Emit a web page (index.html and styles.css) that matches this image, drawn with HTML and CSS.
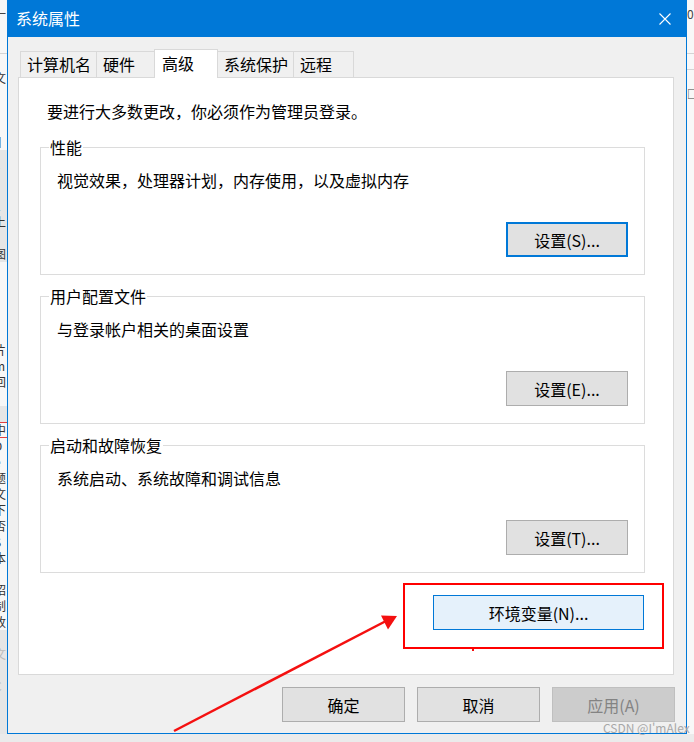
FILE: index.html
```html
<!DOCTYPE html>
<html lang="zh-CN">
<head>
  <meta charset="UTF-8" />
  <meta name="viewport" content="width=device-width, initial-scale=1.0"/>
  <title>系统属性</title>
  <link rel="stylesheet" href="styles.css">
</head>
<body>
  <div class="desk">
    <!-- window behind, left edge -->
    <div class="behind behind-left">
      <div class="ln dk">一</div>
      <div class="ln"></div>
      <div class="ln rule"></div>
      <div class="ln"></div>
      <div class="ln">文</div>
      <div class="ln"></div>
      <div class="ln"></div>
      <div class="ln"></div>
      <div class="ln dk bold">I</div>
      <div class="ln gr"></div>
      <div class="ln gr">亻</div>
      <div class="ln gr"></div>
      <div class="ln gr">1</div>
      <div class="ln gr">上</div>
      <div class="ln gr"></div>
      <div class="ln gr">图</div>
      <div class="ln"></div>
      <div class="ln"></div>
      <div class="ln"></div>
      <div class="ln"></div>
      <div class="ln"></div>
      <div class="ln">片</div>
      <div class="ln">m</div>
      <div class="ln">回</div>
      <div class="ln"></div>
      <div class="ln gr"></div>
      <div class="ln boxed">中</div>
      <div class="ln">D</div>
      <div class="ln">e</div>
      <div class="ln">题</div>
      <div class="ln">文</div>
      <div class="ln">下</div>
      <div class="ln">否</div>
      <div class="ln">S</div>
      <div class="ln">本</div>
      <div class="ln"></div>
      <div class="ln">绍</div>
      <div class="ln">制</div>
      <div class="ln">收</div>
      <div class="ln gr"></div>
      <div class="ln gr faint">文</div>
      <div class="ln gr"></div>
      <div class="ln gr faint">C</div>
      <div class="ln gr"></div>
      <div class="ln gr"></div>
      <div class="ln gr"></div>
    </div>

    <div class="window">
      <div class="titlebar">
        <span class="title">系统属性</span>
        <span class="close">
          <svg width="12" height="12" viewBox="0 0 12 12">
            <path d="M0.5 0.5L11.5 11.5M11.5 0.5L0.5 11.5" stroke="#fff" stroke-width="1.1" fill="none"/>
          </svg>
        </span>
      </div>

      <div class="tabs">
        <div class="tab">计算机名</div>
        <div class="tab">硬件</div>
        <div class="tab active">高级</div>
        <div class="tab">系统保护</div>
        <div class="tab">远程</div>
      </div>

      <div class="panel">
        <p class="intro">要进行大多数更改，你必须作为管理员登录。</p>

        <fieldset class="group">
          <legend>性能</legend>
          <p class="desc">视觉效果，处理器计划，内存使用，以及虚拟内存</p>
          <div class="actions"><button class="btn focus">设置(S)...</button></div>
        </fieldset>

        <fieldset class="group">
          <legend>用户配置文件</legend>
          <p class="desc">与登录帐户相关的桌面设置</p>
          <div class="actions"><button class="btn">设置(E)...</button></div>
        </fieldset>

        <fieldset class="group">
          <legend>启动和故障恢复</legend>
          <p class="desc">系统启动、系统故障和调试信息</p>
          <div class="actions"><button class="btn">设置(T)...</button></div>
        </fieldset>

        <div class="env-row">
          <div class="mark"><button class="btn hot">环境变量(N)...</button></div>
        </div>
      </div>

      <div class="footer">
        <button class="btn wide">确定</button>
        <button class="btn wide">取消</button>
        <button class="btn wide" disabled>应用(A)</button>
      </div>
    </div>

    <!-- window behind, right edge -->
    <div class="behind behind-right">
      <div class="ln dk">0</div>
      <div class="ln"></div>
      <div class="ln rule"></div>
      <div class="ln rule"></div>
      <div class="ln"></div>
      <div class="ln dk">□</div>
    </div>
  </div>

  <!-- annotation -->
  <svg class="annot" width="694" height="742" viewBox="0 0 694 742">
    <line x1="174" y1="731" x2="386" y2="621" stroke="#f41010" stroke-width="2.5"/>
    <polygon points="397,616 381,615.5 388,629.5" fill="#f41010"/>
    <rect x="472" y="649" width="2" height="2" fill="#f41010"/>
  </svg>

  <div class="watermark">CSDN @I'mAlex</div>
</body>
</html>
```

FILE: styles.css
```css
body {
  margin: 0;
  width: 694px;
  height: 742px;
  overflow: hidden;
  position: relative;
  background: #ebebeb;
  font-family: "Noto Sans CJK SC", "Noto Sans", sans-serif;
  font-size: 16px;
  color: #000;
}

p {
  margin: 0;
}

.desk {
  display: flex;
  height: 734px;
}

/* bits of the windows behind the dialog */
.behind {
  width: 7px;
  flex: none;
  overflow: hidden;
  padding-top: 6px;
  box-sizing: border-box;
  font-size: 12px;
  color: #333;
}

.behind-left {
  background: #f7f7f7;
}

.behind-right {
  background: #f8f8f8;
  color: #555;
}

.ln {
  height: 16px;
  line-height: 16px;
  white-space: nowrap;
}

.behind-left .ln {
  text-indent: -6px;
}

.ln.gr { background: #e6e6e6; }
.ln.dk { color: #444; }
.ln.bold { font-weight: bold; font-size: 14px; text-indent: -3px; }
.ln.faint { color: #bbb; }
.ln.rule { border-bottom: 1px solid #d4d4d4; box-sizing: border-box; }
.ln.boxed { border-top: 1px solid #e04040; border-bottom: 1px solid #e04040; box-sizing: border-box; line-height: 14px; }

/* dialog window */
.window {
  width: 680px;
  height: 734px;
  flex: none;
  box-sizing: border-box;
  border: 1px solid #0078d7;
  border-top: 0;
  background: #f0f0f0;
}

.titlebar {
  height: 37px;
  background: #0078d7;
  color: #fff;
  display: flex;
  align-items: center;
  justify-content: space-between;
  padding-left: 9px;
  margin: 0 -1px;
}

.title {
  line-height: 37px;
}

.close {
  width: 44px;
  height: 37px;
  display: flex;
  align-items: center;
  justify-content: center;
}

/* tabs */
.tabs {
  display: flex;
  align-items: flex-end;
  padding: 12px 0 0 12px;
}

.tab {
  height: 26px;
  min-width: 61px;
  box-sizing: border-box;
  padding: 0 5px 0 6px;
  border: 1px solid #d9d9d9;
  border-bottom: 0;
  margin-right: -1px;
  line-height: 24px;
  background: #f0f0f0;
  white-space: nowrap;
}

.tab.active {
  height: 29px;
  min-width: 64px;
  margin: 0 -1px -1px -2px;
  padding-left: 7px;
  line-height: 27px;
  background: #fff;
  position: relative;
  z-index: 1;
}

.panel {
  margin-left: 10px;
  width: 656px;
  height: 598px;
  box-sizing: border-box;
  background: #fff;
  border: 1px solid #d9d9d9;
}

.intro {
  margin: 23px 0 0 28px;
  line-height: 20px;
}

/* group boxes */
.group {
  margin: 16px 0 0 21px;
  width: 605px;
  box-sizing: border-box;
  border: 1px solid #dcdcdc;
  padding: 0;
}

.group + .group {
  margin-top: 11px;
}

.group legend {
  margin-left: 8px;
  padding: 0 1px;
  line-height: 21px;
}

.desc {
  margin: 12px 0 0 16px;
  line-height: 20px;
}

.actions {
  display: flex;
  justify-content: flex-end;
  padding: 32px 16px 17px 0;
}

/* buttons */
.btn {
  font: inherit;
  color: #000;
  width: 122px;
  height: 35px;
  box-sizing: border-box;
  padding: 0;
  background: #e1e1e1;
  border: 1px solid #adadad;
  border-radius: 0;
}

.btn.focus {
  border: 2px solid #0078d7;
}

.btn.hot {
  width: 211px;
  background: #e5f1fb;
  border-color: #0078d7;
}

.btn.wide {
  width: 123px;
}

.btn:disabled {
  background: #cccccc;
  border-color: #bfbfbf;
  color: #838383;
}

.env-row {
  display: flex;
  justify-content: flex-end;
  margin: 10px 9px 0 0;
}

.mark {
  border: 2px solid #f00;
  padding: 10px 18px 17px 28px;
}

.footer {
  display: flex;
  justify-content: flex-end;
  gap: 12px;
  padding: 12px 11px 0 0;
}

/* overlays */
.annot {
  position: absolute;
  top: 0;
  left: 0;
  pointer-events: none;
}

.watermark {
  position: absolute;
  left: 603px;
  top: 720px;
  font-size: 12px;
  line-height: 15px;
  color: #a8a8a8;
  white-space: nowrap;
}
```
